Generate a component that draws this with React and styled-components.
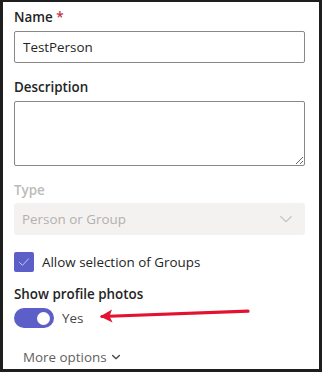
import React from "react";
import styled, { createGlobalStyle } from "styled-components";

const Global = createGlobalStyle`
  html, body {
    margin: 0;
    padding: 0;
    background: #ffffff;
  }
  * {
    box-sizing: border-box;
  }
`;

function ChevronDown({ size = 12, color = "currentColor", width = 1 }) {
  return (
    <svg width={size} height={size} viewBox="0 0 12 12" fill="none">
      <path d="M2 4.2 L6 8 L10 4.2" stroke={color} strokeWidth={width} strokeLinecap="round" strokeLinejoin="round" />
    </svg>
  );
}

function App() {
  return (
    <>
      <Global />
      <Frame>
        <Field>
          <Label>
            Name <Required>*</Required>
          </Label>
          <Input defaultValue="TestPerson" />
        </Field>

        <Field>
          <Label>Description</Label>
          <TextArea />
        </Field>

        <Field $tight>
          <Label $disabled>Type</Label>
          <Select>
            <span>Person or Group</span>
            <ChevronDown size={16} color="#c8c6c4" />
          </Select>
        </Field>

        <CheckRow>
          <CheckBox>
            <svg width="14" height="14" viewBox="0 0 14 14" fill="none">
              <path d="M2.5 7.5 L5.5 10.3 L11.5 3.8" stroke="#c5c7f0" strokeWidth="1" strokeLinecap="round" strokeLinejoin="round" />
            </svg>
          </CheckBox>
          <CheckText>Allow selection of Groups</CheckText>
        </CheckRow>

        <ToggleBlock>
          <Label>Show profile photos</Label>
          <ToggleRow>
            <Toggle $on>
              <Knob />
            </Toggle>
            <ToggleText>Yes</ToggleText>
          </ToggleRow>
          <Arrow width="160" height="20" viewBox="0 0 160 20">
            <path d="M3 12.5 L149 7.2" stroke="#e3122f" strokeWidth="3.2" strokeLinecap="round" />
            <path d="M1 12.6 L13 5.5 L10.5 12.2 L13.6 18.6 Z" fill="#e3122f" />
          </Arrow>
        </ToggleBlock>

        <MoreOptions>
          More options
          <ChevronDown size={10} color="#444" width={1.6} />
        </MoreOptions>
      </Frame>
    </>
  );
}

export default App;

const Frame = styled.div`
  width: 322px;
  height: 372px;
  border: 3px solid #1e1e1e;
  border-top-width: 2px;
  padding: 5px 14px 0 11px;
  font-family: "Segoe UI", "Open Sans", sans-serif;
  font-size: 13.4px;
  color: #252424;
  background: #ffffff;
  overflow: hidden;
`;

const Field = styled.div`
  display: flex;
  flex-direction: column;
  gap: ${(p) => (p.$tight ? "3px" : "4px")};
  margin-bottom: 14px;
`;

const Label = styled.div`
  font-weight: 600;
  line-height: 20px;
  color: ${(p) => (p.$disabled ? "#bdbbb9" : "#252424")};
`;

const Required = styled.span`
  color: #c4314b;
`;

const Input = styled.input`
  height: 32px;
  width: 100%;
  border: 1px solid #8a8886;
  border-radius: 2px;
  padding: 0 8px;
  font: inherit;
  color: #252424;
  outline: none;
`;

const TextArea = styled.textarea`
  height: 65px;
  width: 100%;
  border: 1px solid #8a8886;
  border-radius: 2px;
  font: inherit;
  display: block;
  resize: vertical;
  outline: none;
`;

const Select = styled.div`
  height: 32px;
  background: #f3f2f1;
  border-radius: 3px;
  display: flex;
  align-items: center;
  justify-content: space-between;
  padding: 0 11px 0 8px;
  color: #b3b0ad;
`;

const CheckRow = styled.div`
  display: flex;
  align-items: center;
  gap: 8px;
  margin-top: 17px;
`;

const CheckBox = styled.div`
  width: 20px;
  height: 20px;
  border-radius: 2px;
  background: #5b5fc7;
  display: flex;
  align-items: center;
  justify-content: center;
`;

const CheckText = styled.span`
  color: #252424;
`;

const ToggleBlock = styled.div`
  position: relative;
  margin-top: 12px;
  display: flex;
  flex-direction: column;
  gap: 4px;
`;

const ToggleRow = styled.div`
  display: flex;
  align-items: center;
  gap: 8px;
`;

const Toggle = styled.div`
  width: 40px;
  height: 20px;
  border-radius: 10px;
  background: ${(p) => (p.$on ? "#5b5fc7" : "#ffffff")};
  display: flex;
  align-items: center;
  justify-content: ${(p) => (p.$on ? "flex-end" : "flex-start")};
  padding: 0 4px;
`;

const Knob = styled.div`
  width: 13px;
  height: 13px;
  border-radius: 50%;
  background: #ffffff;
`;

const ToggleText = styled.span`
  color: #484644;
`;

const Arrow = styled.svg`
  position: absolute;
  left: 85px;
  top: 20px;
`;

const MoreOptions = styled.div`
  margin-top: 20px;
  padding-left: 9px;
  display: flex;
  align-items: center;
  gap: 4px;
  color: #616161;
`;
